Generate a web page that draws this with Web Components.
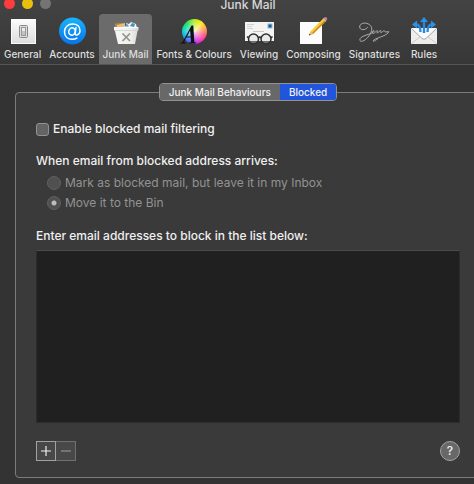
<!DOCTYPE html>
<html lang="en">
<head>
<meta charset="utf-8">
<title>Junk Mail</title>
<style>
  html, body {
    margin: 0;
    height: 100%;
    overflow: hidden;
    background: #373737;
  }
  body {
    font-family: Inter, "Liberation Sans", sans-serif;
    font-size: 12px;
    font-weight: 500;
    color: #f0f0f0;
  }
</style>
</head>
<body>

<mail-preferences></mail-preferences>

<template id="icon-general">
  <svg viewBox="0 0 32 32" width="32" height="32">
    <defs><linearGradient id="g" x2="0" y2="1"><stop stop-color="#fbfbfb"/><stop offset="1" stop-color="#dedede"/></linearGradient></defs>
    <rect x="4" y="4" width="25" height="25" fill="#fafafa"/>
    <rect x="5" y="5" width="23" height="23" fill="url(#g)"/>
    <rect x="12.500" y="10.500" width="8" height="12" rx="1" fill="#ddd" stroke="#888"/>
    <rect x="14.500" y="12.500" width="4" height="8" fill="#c2c2c2" stroke="#999"/>
    <path d="M15 13h3v3h-3z" fill="#ececec"/>
  </svg>
</template>

<template id="icon-accounts">
  <svg viewBox="0 0 32 32" width="32" height="32">
    <defs><linearGradient id="g" x2="0" y2="1"><stop stop-color="#18b5f8"/><stop offset="1" stop-color="#0873ec"/></linearGradient></defs>
    <circle cx="16.500" cy="16" r="13.500" fill="url(#g)"/>
    <g fill="none" stroke="#fff" stroke-width="1.500" stroke-linecap="round">
      <ellipse cx="16" cy="16.500" rx="3.200" ry="3.700" transform="rotate(15 16 16.500)"/>
      <path d="M20 12.600l-.9 6c-.3 2.500 4.900 1.700 4.900-3 0-4.300-3.200-6.700-7.300-6.700-4.900 0-8.200 3.400-8.200 8 0 4.400 3.200 7.300 7.800 7.300 1.800 0 3.400-.4 4.600-1.100"/>
    </g>
  </svg>
</template>

<template id="icon-junk">
  <svg viewBox="0 0 32 32" width="32" height="32">
    <defs><linearGradient id="g"><stop stop-color="#f8f8f6"/><stop offset=".7" stop-color="#eeeeec"/><stop offset="1" stop-color="#d8d8d6"/></linearGradient></defs>
    <path d="M5 8.500l8-.5 2 5H5z" fill="#bd843f"/>
    <path d="M7 10l8-2 2 5H7z" fill="#e8bd78"/>
    <path d="M14 13l2-5 3 1 2-2 5 2 1 4H14z" fill="#f4f5f6"/>
    <path d="M17 9l2 2-3 1zM22 8l3 1-1 3-4-1z" fill="#3d93cb"/>
    <path d="M15 8l2 1-2 3z" fill="#345c7c"/>
    <path d="M4 12h24.500v3l-1 1-2.500 13H8L5 16l-1-1z" fill="url(#g)"/>
    <path d="M5 15.500h22.500" stroke="#cfcfcc" stroke-width=".8"/>
    <path d="M4.500 12.500h23.500" stroke="#fff"/>
    <path d="M12.500 18.500l7.500 7.500M20 18.500l-7.500 7.500" stroke="#93938f" stroke-width="1.700"/>
  </svg>
</template>

<template id="icon-fonts">
  <style>
    .wheel {
      width: 25px;
      height: 25px;
      border-radius: 50%;
      background:
        radial-gradient(circle, #fffc 0, #fff0 65%),
        conic-gradient(#b5ec20, #ffe51c 40deg, #ff9c4e 75deg, #ff5379 110deg, #f72bc0 145deg, #8c35f5 190deg, #1e91fa 230deg, #08d8c7 275deg, #19df68 315deg, #b5ec20);
    }
    .pair {
      display: grid;
      width: 32px;
      height: 32px;
    }
    .pair > * {
      grid-area: 1 / 1;
      place-self: center;
    }
  </style>
  <div class="pair">
    <div class="wheel"></div>
    <svg viewBox="0 0 32 32" width="32" height="32">
      <path d="M2.500 27.800l2-.5L13.500 10.500h1.800L16.300 27l1.700.8v.8H11v-.8l2-.6-.3-4.600H8.300L6 27.200l2 .6v.8H2.500zM9 21.400h3.600l-.5-6z" fill="#101014"/>
    </svg>
  </div>
</template>

<template id="icon-viewing">
  <svg viewBox="0 0 32 32" width="32" height="32">
    <rect x="2" y="7" width="29" height="19" fill="#f4f4f4"/>
    <path d="M4 9.500h7M4 11.500h5M4 13.500h6" stroke="#d2d2d2"/>
    <rect x="25" y="9" width="4" height="4" fill="#245b91" stroke="#91bcdf"/>
    <path d="M10 16.500h11" stroke="#d5b49a" stroke-width=".8"/>
    <g fill="#d9d9d955" stroke="#303030" stroke-width="1.500">
      <circle cx="10.500" cy="24" r="5"/>
      <circle cx="23" cy="24" r="5"/>
      <path d="M15.400 23q1.350-2 2.700 0M5.600 23L4 21.500M28 23l1.500-1.500" fill="none"/>
    </g>
  </svg>
</template>

<template id="icon-composing">
  <svg viewBox="0 0 32 32" width="32" height="32">
    <rect x="3" y="7" width="22" height="22" fill="#fcfcfc"/>
    <path d="M12 20.500l1.500-4L26 3.800l2.800 2.400L16 19z" fill="#f3ba27"/>
    <path d="M14.500 17L26.600 4.600" stroke="#ffdc5e"/>
    <path d="M16 19L28.800 6.200l-.9-.8-12.700 12.900z" fill="#c8820f"/>
    <path d="M26.500 3.300l1.300-1.200c1.200-.8 3.100.9 2.300 2.200l-1 1.400z" fill="#cb7b84"/>
    <path d="M26 3.500l3 2.600" stroke="#c3c3c3" stroke-width="1.200"/>
    <path d="M12 20.500l1.500-4L16 19z" fill="#e0bd87"/>
    <path d="M12 20.500l.6-1.700 1 1z" fill="#292725"/>
  </svg>
</template>

<template id="icon-signatures">
  <svg viewBox="0 0 32 32" width="32" height="32">
    <path d="M9.500 12.500C7 15.500 2 15.500 1.700 12 1.500 9 5 7.500 8.500 8.300c4.500 1 6.500 4.700 4.500 9-2 4.700-6.500 9-9.500 9-2.800 0-2-3.500 1.500-5 4-1.800 8-2.200 10.500-4.300 1.200-1 .8-1.800-.2-1.300-1.400.7-1.600 2.900 0 2.700 1.700-.3 2.600-2.400 3.900-2.700.8-.1-.8 2.200 0 2.200.9 0 2.300-2.300 3.500-2.300.9 0-.8 2.100.2 2.100.9 0 2-2 3.200-2 1 0 .2 1.300 1.500 1.300 1 0 2-.5 3.200-.3-1.500 3.500-8 5-11.500 6.500-2.500 1-5 2.500-4 3 1 .4 3-1.500 4.500-2.500" fill="none" stroke="#adadad" stroke-linecap="round" stroke-linejoin="round"/>
  </svg>
</template>

<template id="icon-rules">
  <svg viewBox="0 0 32 32" width="32" height="32">
    <rect x="3" y="13" width="26" height="16" fill="#ededec"/>
    <path d="M3 29l10-8M29 29l-10-8" stroke="#cbcbca" fill="none"/>
    <path d="M3 13l11 10.500q2 1.500 4 0L29 13z" fill="#fafafa"/>
    <path d="M3 13l11 10.500q2 1.500 4 0L29 13" fill="none" stroke="#a6a6a6"/>
    <g fill="none" stroke="#2688df" stroke-width="2.400">
      <path d="M16 18V6M12.500 17q0-7.500-4.500-7.500M19.500 17q0-7.500 4.500-7.500"/>
    </g>
    <path d="M16 2l4 5h-8zM4 9.500L9 5.500v8zM28 9.500l-5-4v8z" fill="#2b91e8"/>
  </svg>
</template>

<script>
class ToolbarItem extends HTMLElement {
  constructor() {
    super();
    this.attachShadow({mode: "open"});
    this.shadowRoot.innerHTML = `
      <style>
        :host {
          display: block;
          flex: none;
        }
        button {
          display: flex;
          flex-direction: column;
          align-items: center;
          box-sizing: border-box;
          height: 50px;
          padding: 1px 4px 0;
          border: 0;
          border-radius: 4px 4px 0 0;
          background: none;
          color: #dedede;
          font: 500 10px/14px Inter, "Liberation Sans", sans-serif;
          white-space: nowrap;
        }
        :host([selected]) button {
          background: #6b6b6b;
        }
        .icon {
          height: 32px;
        }
      </style>
      <button type="button">
        <span class="icon"></span>
        <slot></slot>
      </button>
    `;
  }

  connectedCallback() {
    const icon = document.getElementById("icon-" + this.getAttribute("icon"));
    this.shadowRoot.querySelector(".icon").append(icon.content.cloneNode(true));
    this.shadowRoot.querySelector("button").setAttribute("aria-pressed", this.hasAttribute("selected"));
  }
}

class WindowHeader extends HTMLElement {
  constructor() {
    super();
    this.attachShadow({mode: "open"});
    this.shadowRoot.innerHTML = `
      <style>
        :host {
          display: block;
          background: linear-gradient(#434343, #373737);
          border-bottom: 1px solid #555;
        }
        /* the top of the title bar is off the screen */
        .title-bar {
          display: grid;
          grid-template-columns: 1fr auto 1fr;
          align-items: start;
          height: 16px;
          padding: 0 4px;
          margin-top: -2px;
        }
        .lights {
          display: flex;
          gap: 7px;
        }
        .lights button {
          width: 11px;
          height: 11px;
          padding: 0;
          border: 0;
          border-radius: 50%;
          background: #fc3d3b;
        }
        .lights button:nth-child(2) {
          background: #e9c10d;
        }
        .lights button:nth-child(3) {
          background: #747474;
        }
        h1 {
          margin: 0;
          font-size: 12px;
          line-height: 14px;
          font-weight: 500;
          color: #d8d8d8;
        }
        nav {
          display: flex;
        }
      </style>
      <div class="title-bar">
        <div class="lights">
          <button type="button" aria-label="Close"></button>
          <button type="button" aria-label="Minimise"></button>
          <button type="button" aria-label="Zoom"></button>
        </div>
        <h1><slot name="title"></slot></h1>
      </div>
      <nav><slot></slot></nav>
    `;
  }
}

class SegmentedControl extends HTMLElement {
  constructor() {
    super();
    this.attachShadow({mode: "open"});
    this.shadowRoot.innerHTML = `
      <style>
        :host {
          display: flex;
          box-sizing: border-box;
          height: 18px;
          border: 1px solid #929292;
          border-radius: 4px;
          overflow: hidden;
        }
        ::slotted(button) {
          padding: 0 9px;
          border: 0;
          background: #686868;
          color: #f2f2f2;
          font: 500 10px/16px Inter, "Liberation Sans", sans-serif;
        }
        ::slotted(button[aria-selected="true"]) {
          background: #2055dc;
        }
      </style>
      <slot></slot>
    `;
    this.setAttribute("role", "tablist");
  }
}

class ChoiceRow extends HTMLElement {
  constructor() {
    super();
    this.attachShadow({mode: "open"});
    this.shadowRoot.innerHTML = `
      <style>
        :host {
          display: flex;
          align-items: center;
          gap: 4px;
          line-height: 20px;
        }
        :host([disabled]) {
          color: #929292;
          font-weight: 400;
        }
        input {
          appearance: none;
          flex: none;
          box-sizing: border-box;
          margin: 0;
          background: #646464;
        }
        input[type="checkbox"] {
          width: 13px;
          height: 13px;
          border: 1px solid #929292;
          border-radius: 3px;
        }
        input[type="radio"] {
          width: 14px;
          height: 14px;
          border: 1px solid #606060;
          border-radius: 50%;
          background: #505050;
        }
        input[type="radio"]:checked {
          background: radial-gradient(circle, #bcbcbc 2px, #505050 3px);
        }
      </style>
      <input id="choice">
      <label for="choice"><slot></slot></label>
    `;
  }

  connectedCallback() {
    const input = this.shadowRoot.getElementById("choice");
    input.type = this.getAttribute("type");
    input.checked = this.hasAttribute("checked");
    input.disabled = this.hasAttribute("disabled");
  }
}

class AddressList extends HTMLElement {
  constructor() {
    super();
    this.attachShadow({mode: "open"});
    this.shadowRoot.innerHTML = `
      <style>
        :host {
          display: flex;
          flex-direction: column;
          flex: 1;
        }
        label {
          line-height: 20px;
          margin-bottom: 4px;
        }
        textarea {
          flex: 1;
          box-sizing: border-box;
          width: 100%;
          margin: 0;
          padding: 4px;
          resize: none;
          border: 1px solid #2c2c2c;
          border-top-color: #4b4b4b;
          background: #202020;
          color: inherit;
          font: inherit;
        }
        .actions {
          display: flex;
          align-items: center;
          justify-content: space-between;
          padding: 18px 0 16px;
        }
        .edit {
          display: flex;
        }
        button {
          display: grid;
          place-items: center;
          box-sizing: border-box;
          height: 20px;
          width: 20px;
          padding: 0;
          border: 1px solid #a2a2a2;
          background: #484848;
          color: #f0f0f0;
        }
        .edit button:disabled {
          border-color: #707070;
          border-left: 0;
          color: #929292;
        }
        .help {
          border-radius: 50%;
          background: #686868;
          font: 500 12px/16px Inter, "Liberation Sans", sans-serif;
        }
      </style>
      <label for="addresses"><slot></slot></label>
      <textarea id="addresses"></textarea>
      <div class="actions">
        <div class="edit">
          <button type="button" aria-label="Add">
            <svg width="12" height="12" viewBox="0 0 12 12"><path d="M1 6h10M6 1v10" stroke="currentColor" stroke-width="1.200"/></svg>
          </button>
          <button type="button" aria-label="Remove" disabled>
            <svg width="12" height="12" viewBox="0 0 12 12"><path d="M1 6h10" stroke="currentColor" stroke-width="1.200"/></svg>
          </button>
        </div>
        <button type="button" class="help">?</button>
      </div>
    `;
  }
}

class TabPanel extends HTMLElement {
  constructor() {
    super();
    this.attachShadow({mode: "open"});
    this.shadowRoot.innerHTML = `
      <style>
        :host {
          display: flex;
          flex-direction: column;
          flex: 1;
          margin: 27px 15px 6px;
          border: 1px solid #7c7c7c;
          border-radius: 4px;
          background: #3a3a3a;
        }
        /* the tabs sit across the top border */
        .tabs {
          display: flex;
          justify-content: center;
          margin-top: -10px;
        }
        .content {
          display: flex;
          flex-direction: column;
          flex: 1;
          padding: 18px 20px 0;
        }
      </style>
      <div class="tabs"><slot name="tabs"></slot></div>
      <div class="content"><slot></slot></div>
    `;
  }
}

class MailPreferences extends HTMLElement {
  constructor() {
    super();
    this.attachShadow({mode: "open"});
    this.shadowRoot.innerHTML = `
      <style>
        /* the window runs a little past the right edge of the screen */
        :host {
          display: flex;
          flex-direction: column;
          width: calc(100% + 22px);
          min-height: 100%;
          background: #333;
        }
        p {
          margin: 12px 0 0;
          line-height: 20px;
        }
        .options {
          padding: 2px 0 13px 11px;
        }
      </style>
      <window-header>
        <span slot="title">Junk Mail</span>
        <toolbar-item icon="general">General</toolbar-item>
        <toolbar-item icon="accounts">Accounts</toolbar-item>
        <toolbar-item icon="junk" selected>Junk Mail</toolbar-item>
        <toolbar-item icon="fonts">Fonts &amp; Colours</toolbar-item>
        <toolbar-item icon="viewing">Viewing</toolbar-item>
        <toolbar-item icon="composing">Composing</toolbar-item>
        <toolbar-item icon="signatures">Signatures</toolbar-item>
        <toolbar-item icon="rules">Rules</toolbar-item>
      </window-header>
      <tab-panel>
        <segmented-control slot="tabs">
          <button type="button" role="tab" aria-selected="false">Junk Mail Behaviours</button>
          <button type="button" role="tab" aria-selected="true">Blocked</button>
        </segmented-control>
        <choice-row type="checkbox">Enable blocked mail filtering</choice-row>
        <p>When email from blocked address arrives:</p>
        <div class="options" role="radiogroup">
          <choice-row type="radio" disabled>Mark as blocked mail, but leave it in my Inbox</choice-row>
          <choice-row type="radio" disabled checked>Move it to the Bin</choice-row>
        </div>
        <address-list>Enter email addresses to block in the list below:</address-list>
      </tab-panel>
    `;
  }
}

customElements.define("toolbar-item", ToolbarItem);
customElements.define("window-header", WindowHeader);
customElements.define("segmented-control", SegmentedControl);
customElements.define("choice-row", ChoiceRow);
customElements.define("address-list", AddressList);
customElements.define("tab-panel", TabPanel);
customElements.define("mail-preferences", MailPreferences);
</script>
</body>
</html>
